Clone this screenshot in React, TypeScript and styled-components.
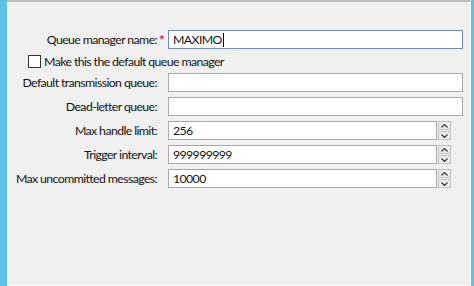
import { FunctionComponent, JSX, Fragment } from 'react';
import styled, { createGlobalStyle } from 'styled-components';

const GlobalStyle = createGlobalStyle`
  html, body {
    margin: 0;
    padding: 0;
    background: #f0f0f0;
  }
`;

const Window = styled.div`
  width: 474px;
  height: 286px;
  display: flex;
  flex-direction: row;
  font-family: Lato, 'Noto Sans', sans-serif;
  font-size: 12.3px;
  letter-spacing: -0.6px;
  color: #141414;
  overflow: hidden;
`;
const SideStrip = styled.div<{ $width: number }>`
  width: ${(p) => p.$width}px;
  background-color: #5ec2e4;
  flex-shrink: 0;
`;
const Panel = styled.div`
  flex: 1;
  display: flex;
  flex-direction: column;
  border-top: 2px solid #bdbdbd;
  border-right: 1px solid #fbfbfb;
  border-bottom: 1px solid #fafafa;
  background-color: #f0f0f0;
`;
const Form = styled.div`
  display: grid;
  grid-template-columns: 150px 11px 295px;
  row-gap: 5px;
  align-items: center;
  padding: 28px 0 0 0;
`;
const Label = styled.div`
  text-align: right;
  white-space: nowrap;
  line-height: 19px;
`;
const Required = styled.div`
  color: #e0252a;
  font-size: 14px;
  font-weight: bold;
  padding-left: 2px;
  line-height: 19px;
`;
const Field = styled.div<{ $focused?: boolean }>`
  height: 19px;
  box-sizing: border-box;
  border: 1px solid ${(p) => (p.$focused ? '#6e8fb5' : '#a9a9a9')};
  background: #ffffff;
  padding: 0 4px;
  line-height: 17px;
  display: flex;
  align-items: center;
  width: 295px;
`;
const Caret = styled.span`
  display: inline-block;
  width: 1px;
  height: 14px;
  background: #000;
  margin-left: 1px;
`;
const SpinRow = styled.div`
  display: flex;
  flex-direction: row;
  align-items: center;
`;
const SpinField = styled(Field)`
  width: 269px;
`;
const SpinButtons = styled.div`
  display: flex;
  flex-direction: column;
  margin-left: 1px;
`;
const SpinButton = styled.div`
  width: 13px;
  height: 9px;
  box-sizing: border-box;
  border: 1px solid #c2c2c2;
  background: #ececec;
  display: flex;
  align-items: center;
  justify-content: center;
  & + & {
    margin-top: 1px;
  }
`;
const CheckRow = styled.div`
  grid-column: 1 / 4;
  display: flex;
  flex-direction: row;
  align-items: center;
  padding-left: 21px;
  height: 14px;
`;
const CheckBox = styled.div`
  width: 13px;
  height: 13px;
  box-sizing: border-box;
  border: 1px solid #333;
  background: #fff;
  margin-right: 3px;
`;

const Arrow: FunctionComponent<{ up?: boolean }> = ({ up }) => (
  <svg width="7" height="4" viewBox="0 0 7 4">
    <path d={up ? 'M0.5 3.5 L3.5 0.5 L6.5 3.5' : 'M0.5 0.5 L3.5 3.5 L6.5 0.5'} fill="none" stroke="#333" strokeWidth="1.2" />
  </svg>
);

const Spinner: FunctionComponent<{ value: string }> = ({ value }) => (
  <SpinRow>
    <SpinField>{value}</SpinField>
    <SpinButtons>
      <SpinButton><Arrow up /></SpinButton>
      <SpinButton><Arrow /></SpinButton>
    </SpinButtons>
  </SpinRow>
);

const App: FunctionComponent = (): JSX.Element => {
  const spinners = [
    { label: 'Max handle limit:', value: '256' },
    { label: 'Trigger interval:', value: '999999999' },
    { label: 'Max uncommitted messages:', value: '10000' },
  ];
  return (
    <Window>
      <GlobalStyle />
      <SideStrip $width={7} />
      <Panel>
        <Form>
          <Label>Queue manager name:</Label>
          <Required>*</Required>
          <Field $focused>MAXIMO<Caret /></Field>

          <CheckRow>
            <CheckBox />
            Make this the default queue manager
          </CheckRow>

          <Label>Default transmission queue:</Label>
          <div />
          <Field />

          <Label>Dead-letter queue:</Label>
          <div />
          <Field />

          {spinners.map((s) => (
            <Fragment key={s.label}>
              <Label>{s.label}</Label>
              <div />
              <Spinner value={s.value} />
            </Fragment>
          ))}
        </Form>
      </Panel>
      <SideStrip $width={3} />
    </Window>
  );
};

export default App;
